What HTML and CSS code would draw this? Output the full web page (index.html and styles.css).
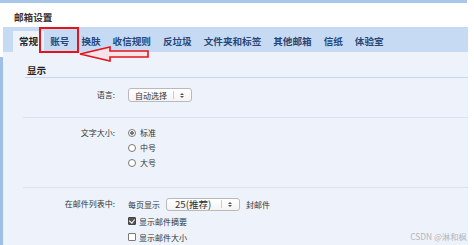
FILE: index.html
```html
<!DOCTYPE html>
<html lang="zh-CN">
  <head>
    <meta charset="UTF-8" />
    <title>邮箱设置</title>
    <link rel="stylesheet" href="styles.css">
  </head>
  <body>
    <div class="page">
      <div class="topline"></div>
      <div class="header">邮箱设置</div>

      <div class="frame">
        <div class="rail"></div>
        <div class="main">
          <ul class="tabs">
            <li class="tab active">常规</li>
            <li class="tab">账号</li>
            <li class="tab">换肤</li>
            <li class="tab">收信规则</li>
            <li class="tab">反垃圾</li>
            <li class="tab">文件夹和标签</li>
            <li class="tab">其他邮箱</li>
            <li class="tab">信纸</li>
            <li class="tab">体验室</li>
          </ul>

          <div class="content">
            <div class="section-title">显示</div>

            <div class="row row-lang">
              <div class="label">语言:</div>
              <div class="control">
                <div class="select select-lang">
                  <span class="select-text">自动选择</span>
                  <span class="select-arrow"><i class="up"></i><i class="down"></i></span>
                </div>
              </div>
            </div>

            <div class="row row-size">
              <div class="label">文字大小:</div>
              <div class="control list">
                <div class="option"><span class="radio checked"></span>标准</div>
                <div class="option"><span class="radio"></span>中号</div>
                <div class="option"><span class="radio"></span>大号</div>
              </div>
            </div>

            <div class="row row-list">
              <div class="label">在邮件列表中:</div>
              <div class="control list">
                <div class="option first">
                  每页显示
                  <div class="select select-count">
                    <span class="select-text">25(推荐)</span>
                    <span class="select-arrow"><i class="up"></i><i class="down"></i></span>
                  </div>
                  封邮件
                </div>
                <div class="option"><span class="check checked"></span>显示邮件摘要</div>
                <div class="option"><span class="check"></span>显示邮件大小</div>
              </div>
            </div>
          </div>
        </div>
      </div>

      <svg class="mark" width="474" height="245" viewBox="0 0 474 245">
        <rect x="40" y="28" width="38" height="24" fill="none" stroke="#e3141b" stroke-width="2" />
        <polygon points="80,54 110,47 110,51 148,51 148,57 110,57 110,61" fill="#f7e4ea" stroke="#e3141b" stroke-width="1.6" stroke-linejoin="miter" />
      </svg>

      <div class="watermark">CSDN @淋和枫</div>
    </div>
  </body>
</html>
```

FILE: styles.css
```css
body {
  margin: 0;
  background: #fff;
  font-family: 'Noto Sans CJK SC', 'Noto Sans', sans-serif;
  color: #333;
}
.page {
  position: relative;
  width: 474px;
  height: 245px;
  overflow: hidden;
}
.topline {
  width: 467px;
  height: 3px;
  background: #a8c5ea;
}
.header {
  height: 24px;
  padding-left: 14px;
  font-size: 9.6px;
  font-weight: bold;
  color: #333;
  line-height: 28px;
}
.frame {
  display: flex;
  width: 468px;
  height: 218px;
}
.rail {
  width: 3px;
  margin-top: 30px;
  background: #9dbfe9;
}
.main {
  flex: 1;
  display: flex;
  flex-direction: column;
}
.tabs {
  display: flex;
  align-items: flex-end;
  list-style: none;
  margin: 0;
  padding: 0 0 0 10px;
  height: 26px;
  background: #c6dbf3;
}
.tab {
  height: 21px;
  line-height: 21px;
  padding: 0 6px;
  font-size: 9.6px;
  font-weight: bold;
  color: #27477a;
}
.tab.active {
  background: #eef3fb;
  color: #222;
}
.content {
  flex: 1;
  background: #eef3fb;
  padding-left: 20px;
}
.section-title {
  margin-left: 2px;
  padding: 11px 0 0 2px;
  line-height: 14px;
  font-size: 9.6px;
  font-weight: bold;
  color: #222;
  border-bottom: 1px solid #c7d7ee;
}
.row {
  display: grid;
  grid-template-columns: 92px 1fr;
  column-gap: 13px;
  align-items: start;
  font-size: 8px;
  border-bottom: 1px solid #d9e2ee;
}
.row-lang {
  padding: 10px 0 15px;
}
.row-lang .label {
  line-height: 14px;
}
.row-size {
  padding: 7px 0 17px;
}
.row-size .label {
  line-height: 15px;
}
.row-list {
  padding: 7px 0 0;
  border-bottom: none;
}
.row-list .label {
  line-height: 18px;
}
.label {
  text-align: right;
  color: #333;
}
.list {
  display: flex;
  flex-direction: column;
}
.option {
  display: flex;
  align-items: center;
  height: 15px;
  color: #333;
}
.row-list .option {
  height: 16px;
}
.row-list .option.first {
  height: 18px;
}
.select {
  display: flex;
  align-items: center;
  height: 12px;
  border: 1px solid #b9b9b9;
  border-radius: 3px;
  background: linear-gradient(#fff, #f4f4f4);
}
.select-lang {
  width: 62px;
}
.select-count {
  width: 72px;
  height: 11px;
  margin: 0 6px 0 6px;
}
.select-text {
  flex: 1;
  padding-left: 6px;
  color: #333;
}
.select-count .select-text {
  padding-left: 8px;
  font-size: 9.6px;
}
.select-arrow {
  display: flex;
  flex-direction: column;
  align-items: center;
  justify-content: center;
  gap: 1px;
  width: 10px;
  height: 8px;
  margin-right: 4px;
  border-left: 1px solid #ccc;
  padding-left: 3px;
}
.select-arrow i {
  width: 0;
  height: 0;
  border-left: 2px solid transparent;
  border-right: 2px solid transparent;
}
.select-arrow .up {
  border-bottom: 2px solid #555;
}
.select-arrow .down {
  border-top: 2px solid #555;
}
.radio {
  box-sizing: border-box;
  width: 8px;
  height: 8px;
  margin-right: 4px;
  border: 1px solid #777;
  border-radius: 50%;
  background: #fff;
}
.radio.checked {
  background: radial-gradient(circle, #777 0 1.6px, #fff 2px);
}
.check {
  box-sizing: border-box;
  position: relative;
  width: 8px;
  height: 8px;
  margin-right: 3px;
  border: 1px solid #7a7a7a;
  border-radius: 1px;
  background: #fff;
}
.check.checked {
  background: #555;
  border-color: #444;
}
.check.checked::after {
  content: '';
  position: absolute;
  left: 1px;
  top: 0;
  width: 3px;
  height: 4px;
  border-right: 1px solid #fff;
  border-bottom: 1px solid #fff;
  transform: rotate(40deg);
}
.mark {
  position: absolute;
  top: 0;
  left: 0;
  pointer-events: none;
}
.watermark {
  position: absolute;
  right: 7px;
  bottom: 3px;
  font-size: 8.4px;
  color: #b2b6bd;
}
```
